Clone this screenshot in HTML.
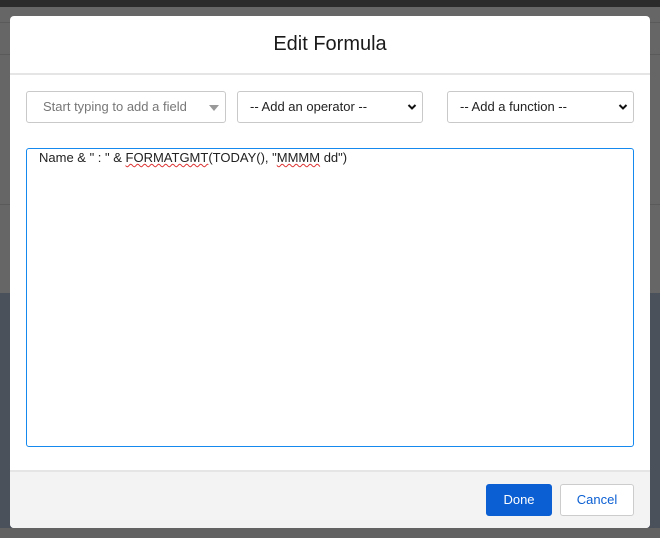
<!DOCTYPE html>
<html><head><style>
body{margin:0;width:660px;height:538px;position:relative;overflow:hidden;font-family:"Liberation Sans",sans-serif;background:#4b515b}
.top{position:absolute;left:0;top:0;width:660px;height:7px;background:#2b2b2b}
.gray{position:absolute;left:0;top:7px;width:660px;height:286px;background:#666}
.line{position:absolute;left:0;width:660px;height:1px;background:#5a5a5a}
.bot{position:absolute;left:0;top:528px;width:660px;height:10px;background:#626262}
.modal{position:absolute;left:10px;top:16px;width:640px;height:512px;background:#fff;border-radius:4px;overflow:hidden}
.hdr{height:57px;border-bottom:2px solid #e5e5e5;text-align:center;line-height:57px;font-size:20px;color:#1a1a1a}
.sel{position:absolute;top:75px;height:32px;border:1px solid #c9c9c9;border-radius:3px;box-sizing:border-box;font-size:13px;line-height:30px;color:#222;padding-left:16px}
.sel svg{position:absolute;right:5px;top:11px}
.ta{position:absolute;left:16px;top:132px;width:608px;height:299px;border:1px solid #1589ee;border-radius:3px;box-sizing:border-box;font-size:13px;color:#222;padding:1px 12px}
.ftr{position:absolute;left:0;top:454px;width:640px;height:58px;background:#f3f3f3;border-top:2px solid #e5e5e5}
.btn{position:absolute;top:12px;height:32px;border-radius:3px;box-sizing:border-box;font-size:13px;line-height:30px;text-align:center}
u{text-decoration:underline wavy #d33;text-decoration-thickness:1px}
</style></head><body>
<div class="top"></div><div class="gray"></div>
<div class="line" style="top:22px"></div><div class="line" style="top:54px"></div><div class="line" style="top:204px"></div>
<div class="bot"></div>
<div class="modal">
<div class="hdr">Edit Formula</div>
<div class="sel" style="left:16px;width:200px;color:#777">Start typing to add a field<span style="position:absolute;right:6px;top:13px;border:5px solid transparent;border-top:6px solid #999;border-bottom:0"></span></div>
<div class="sel" style="left:227px;width:186px;padding-left:12px">-- Add an operator --<svg width="10" height="8" viewBox="0 0 10 8"><path d="M1.5 2 L5 5.5 L8.5 2" fill="none" stroke="#111" stroke-width="2"/></svg></div>
<div class="sel" style="left:437px;width:187px;padding-left:12px">-- Add a function --<svg width="10" height="8" viewBox="0 0 10 8"><path d="M1.5 2 L5 5.5 L8.5 2" fill="none" stroke="#111" stroke-width="2"/></svg></div>
<div class="ta">Name &amp; " : " &amp; <u>FORMATGMT</u>(TODAY(), "<u>MMMM</u> dd")</div>
<div class="ftr">
<div class="btn" style="left:476px;width:66px;background:#0b5fd3;color:#fff;border:1px solid #0b5fd3">Done</div>
<div class="btn" style="left:550px;width:74px;background:#fff;color:#0b5fd3;border:1px solid #ccc">Cancel</div>
</div>
</div>
</body></html>
